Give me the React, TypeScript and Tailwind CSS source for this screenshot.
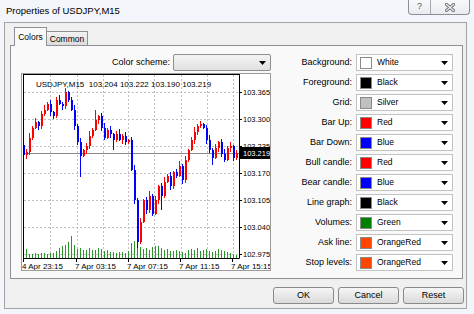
import React from "react";

const closes = [
  155, 152, 138, 128, 122, 126, 114, 110, 104, 112, 116, 100, 104, 106, 92, 100,
  110, 126, 142, 156, 150, 146, 136, 130, 120, 116, 128, 138, 130, 134, 140, 134,
  140, 136, 142, 140, 170, 200, 242, 222, 200, 210, 196, 214, 200, 186, 196, 182,
  176, 186, 172, 176, 166, 180, 160, 150, 140, 132, 126, 124, 128, 140, 150, 158,
  148, 142, 154, 160, 148, 146, 158, 153,
];

const vols = [
  6, 9, 4, 4, 5, 4, 5, 5, 4, 5, 5, 7, 10, 12, 13, 16, 22, 13, 9, 10, 8, 8, 10, 8,
  8, 10, 9, 7, 8, 6, 6, 5, 6, 6, 5, 7, 15, 17, 12, 11, 9, 10, 8, 11, 12, 12, 10, 8,
  9, 7, 7, 8, 7, 6, 5, 8, 9, 8, 10, 7, 8, 9, 7, 6, 7, 9, 8, 7, 6, 5, 4, 3,
];

const lowOv: Record<number, number> = { 0: 160, 19: 177, 30: 150, 38: 248, 46: 210, 63: 165 };
const highOv: Record<number, number> = { 14: 88, 24: 110, 59: 121 };

const hy = [92, 119, 146, 173, 200, 227, 254];
const prices = ["103.365", "103.300", "103.235", "103.170", "103.105", "103.040", "102.975"];
const vx = [50, 77, 103, 128, 154, 181, 207, 233];
const dates: [number, string][] = [
  [22, "4 Apr 23:15"],
  [75, "7 Apr 03:15"],
  [127, "7 Apr 07:15"],
  [179, "7 Apr 11:15"],
  [231, "7 Apr 15:15"],
];

const rows = [
  { label: "Background:", value: "White", sw: "bg-[#ffffff]" },
  { label: "Foreground:", value: "Black", sw: "bg-[#000000]" },
  { label: "Grid:", value: "Silver", sw: "bg-[#c0c0c0]" },
  { label: "Bar Up:", value: "Red", sw: "bg-[#ff0000]" },
  { label: "Bar Down:", value: "Blue", sw: "bg-[#0000ff]" },
  { label: "Bull candle:", value: "Red", sw: "bg-[#ff0000]" },
  { label: "Bear candle:", value: "Blue", sw: "bg-[#0000ff]" },
  { label: "Line graph:", value: "Black", sw: "bg-[#000000]" },
  { label: "Volumes:", value: "Green", sw: "bg-[#008000]" },
  { label: "Ask line:", value: "OrangeRed", sw: "bg-[#ff4500]" },
  { label: "Stop levels:", value: "OrangeRed", sw: "bg-[#ff4500]" },
];

function Arrow() {
  return (
    <svg width="7" height="4" viewBox="0 0 7 4">
      <path d="M0 0h7L3.5 4z" fill="#000" />
    </svg>
  );
}

function Chart() {
  const font = "'Liberation Sans', Arial, sans-serif";
  return (
    <svg width="248" height="196" viewBox="22 74 248 196" className="block">
      {/* grid */}
      {hy.map((y) => (
        <line key={"h" + y} x1={24} x2={239} y1={y + 0.5} y2={y + 0.5} stroke="#c0c0c0" strokeDasharray="2 2" />
      ))}
      {vx.map((x) => (
        <line key={"v" + x} x1={x + 0.5} x2={x + 0.5} y1={75} y2={258} stroke="#c0c0c0" strokeDasharray="2 2" />
      ))}

      {/* volumes */}
      {vols.map((v, i) => {
        const x = 24 + i * 3 - 0.5;
        return <line key={"vol" + i} x1={x} x2={x} y1={258} y2={258 - v} stroke="#2a962a" />;
      })}

      {/* bid line */}
      <line x1={24} x2={239} y1={153.5} y2={153.5} stroke="#8c8c8c" />

      {/* candles */}
      {closes.map((c, i) => {
        const o = i === 0 ? 145 : closes[i - 1];
        const cx = 24 + i * 3;
        const top = Math.min(o, c);
        const bot = Math.max(o, c);
        const hi = highOv[i] ?? top - ((i * 7) % 5) - 1;
        const lo = lowOv[i] ?? bot + ((i * 3) % 4) + 1;
        const col = c < o ? "#ff0000" : "#0000ff";
        return (
          <g key={"c" + i}>
            <line x1={cx - 0.5} x2={cx - 0.5} y1={hi} y2={lo} stroke={col} />
            <rect x={cx - 1} y={top} width={2} height={Math.max(1, bot - top)} fill={col} />
          </g>
        );
      })}

      {/* plot frame */}
      <path d="M23.5 74.5 V258.5 H239.5 V74.5" fill="none" stroke="#000" />
      <line x1={23} x2={240} y1={74.5} y2={74.5} stroke="#000" />

      {/* price axis */}
      {hy.map((y, k) => (
        <g key={"p" + y}>
          <line x1={239} x2={242} y1={y + 0.5} y2={y + 0.5} stroke="#000" />
          <text x={243} y={y + 3} fontSize="7.5" fontFamily={font} fill="#000">
            {prices[k]}
          </text>
        </g>
      ))}
      <rect x={240} y={147} width={32} height={12} fill="#000" />
      <text x={243} y={156} fontSize="7.5" fontFamily={font} fill="#fff">
        103.219
      </text>

      {/* time axis */}
      {dates.map(([x, t]) => (
        <g key={t}>
          <line x1={x + 1.5} x2={x + 1.5} y1={258} y2={262} stroke="#000" />
          <text x={x} y={269} fontSize="8" fontFamily={font} fill="#000">
            {t}
          </text>
        </g>
      ))}

      <text x={36} y={87} fontSize="8" fontFamily={font} fill="#000" xmlSpace="preserve">
        USDJPY,M15  103.204 103.222 103.190 103.219
      </text>
    </svg>
  );
}

export default function App() {
  return (
    <div className="w-[474px] h-[314px] overflow-hidden bg-[#f2f5f9] font-['Liberation_Sans',Arial,sans-serif] text-black">
      {/* title bar */}
      <div className="h-[22px] flex items-start justify-between">
        <div className="pl-[6px] pt-[5px] text-[9.5px] leading-[12px]">Properties of USDJPY,M15</div>
        <div className="mr-[4px] flex h-[15px] rounded-b-[4px] border border-t-0 border-[#8b9097] bg-gradient-to-b from-[#f8f9fb] to-[#e8ebf0]">
          <div className="w-[22px] flex items-center justify-center border-r border-[#a4a9b0] text-[9px] text-[#555]">
            ?
          </div>
          <div className="w-[38px] flex items-center justify-center">
            <svg width="10" height="9" viewBox="0 0 10 9">
              <path d="M1.5 1.5l7 6M8.5 1.5l-7 6" stroke="#6a6f76" strokeWidth="3" strokeLinecap="square" />
              <path d="M1.5 1.5l7 6M8.5 1.5l-7 6" stroke="#f4f5f7" strokeWidth="1.2" strokeLinecap="square" />
            </svg>
          </div>
        </div>
      </div>

      {/* client area */}
      <div className="ml-[4px] w-[463px] h-[287px] border border-[#a3a3a3] bg-[#f0f0f0] flex flex-col">
        {/* tabs */}
        <div className="h-[22px] flex items-end pl-[9px]">
          <div className="relative z-10 -mb-px h-[19px] w-[33px] border border-b-0 border-[#8e9096] bg-[#f9f9f9] text-[8.5px] flex justify-center pt-[3px]">
            Colors
          </div>
          <div className="h-[14px] w-[41px] border border-l-0 border-b-0 border-[#8e9096] bg-gradient-to-b from-[#f2f2f2] to-[#dcdcdc] text-[8.5px] flex justify-center pt-[1px]">
            Common
          </div>
        </div>

        {/* tab page */}
        <div className="ml-[5px] w-[453px] h-[234px] border border-[#8e9096] bg-[#f9f9f9] flex pl-[10px] pt-[8px]">
          <div className="w-[250px] flex flex-col">
            <div className="h-[17px] flex items-center justify-end gap-[3px]">
              <span className="text-[9px]">Color scheme:</span>
              <div className="w-[98px] h-[17px] rounded-[2px] border border-[#8f8f8f] bg-gradient-to-b from-[#f4f4f4] to-[#e0e0e0] flex items-center justify-end pr-[4px]">
                <Arrow />
              </div>
            </div>
            <div className="mt-[2px] w-[250px] h-[198px] border border-[#9c9c9c] bg-white">
              <Chart />
            </div>
          </div>

          <div className="ml-[9px] flex flex-col gap-[3px]">
            {rows.map((r) => (
              <div key={r.label} className="h-[17px] flex items-center gap-[4px]">
                <span className="w-[72px] text-right text-[9px] whitespace-nowrap">{r.label}</span>
                <div className="w-[97px] h-[17px] border border-[#c3c3c3] bg-white flex items-center pl-[3px] pr-[4px]">
                  <span className={`w-[12px] h-[12px] border border-[#8a8a8a] ${r.sw}`} />
                  <span className="ml-[5px] flex-1 text-[8.5px]">{r.value}</span>
                  <Arrow />
                </div>
              </div>
            ))}
          </div>
        </div>

        {/* buttons */}
        <div className="mt-[8px] flex justify-end gap-[4px] pr-[2px]">
          {["OK", "Cancel", "Reset"].map((b) => (
            <div
              key={b}
              className="w-[61px] h-[17px] rounded-[3px] border border-[#8a8a8a] bg-gradient-to-b from-[#f6f6f6] to-[#dadada] flex items-center justify-center text-[9px]"
            >
              {b}
            </div>
          ))}
        </div>
      </div>
    </div>
  );
}
